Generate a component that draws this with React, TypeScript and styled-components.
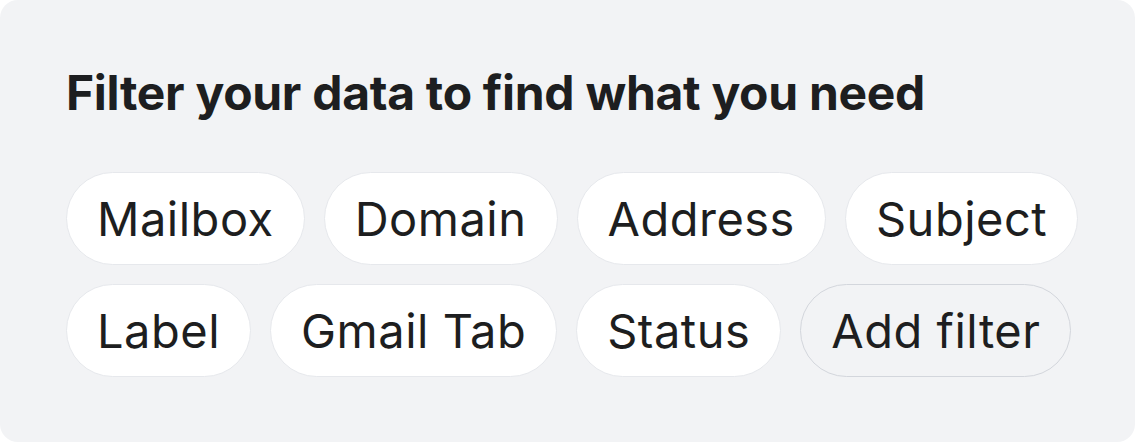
import styled, { createGlobalStyle } from "styled-components";

const GlobalStyle = createGlobalStyle`
  body {
    margin: 0;
    background: #ffffff;
    font-family: Inter, "Noto Sans", sans-serif;
  }
`;

const Card = styled.div`
  box-sizing: border-box;
  width: 1135px;
  height: 442px;
  background: #f2f3f5;
  border-radius: 18px;
  padding: 64px 40px 64px 66px;
  display: flex;
  flex-direction: column;
  gap: 50px;
`;

const Heading = styled.h2`
  margin: 0;
  font-size: 48px;
  line-height: 58px;
  font-weight: 700;
  color: #1d1e20;
  letter-spacing: -0.3px;
`;

const ChipList = styled.div`
  display: flex;
  flex-wrap: wrap;
  gap: 19px;
`;

const Chip = styled.button<{ $outlined?: boolean }>`
  box-sizing: border-box;
  height: 93px;
  padding: 0 30px;
  border-radius: 999px;
  border: 1.5px solid ${(p) => (p.$outlined ? "#d3d6dc" : "#e6e8ec")};
  background: ${(p) => (p.$outlined ? "transparent" : "#ffffff")};
  font-family: Inter, "Noto Sans", sans-serif;
  font-size: 47px;
  letter-spacing: 0.5px;
  font-weight: 400;
  color: #1d1e20;
  cursor: pointer;
`;

const filters = ["Mailbox", "Domain", "Address", "Subject", "Label", "Gmail Tab", "Status"];

export default function App() {
  return (
    <>
      <GlobalStyle />
      <Card>
        <Heading>Filter your data to find what you need</Heading>
        <ChipList>
          {filters.map((f) => (
            <Chip key={f}>{f}</Chip>
          ))}
          <Chip $outlined>Add filter</Chip>
        </ChipList>
      </Card>
    </>
  );
}
